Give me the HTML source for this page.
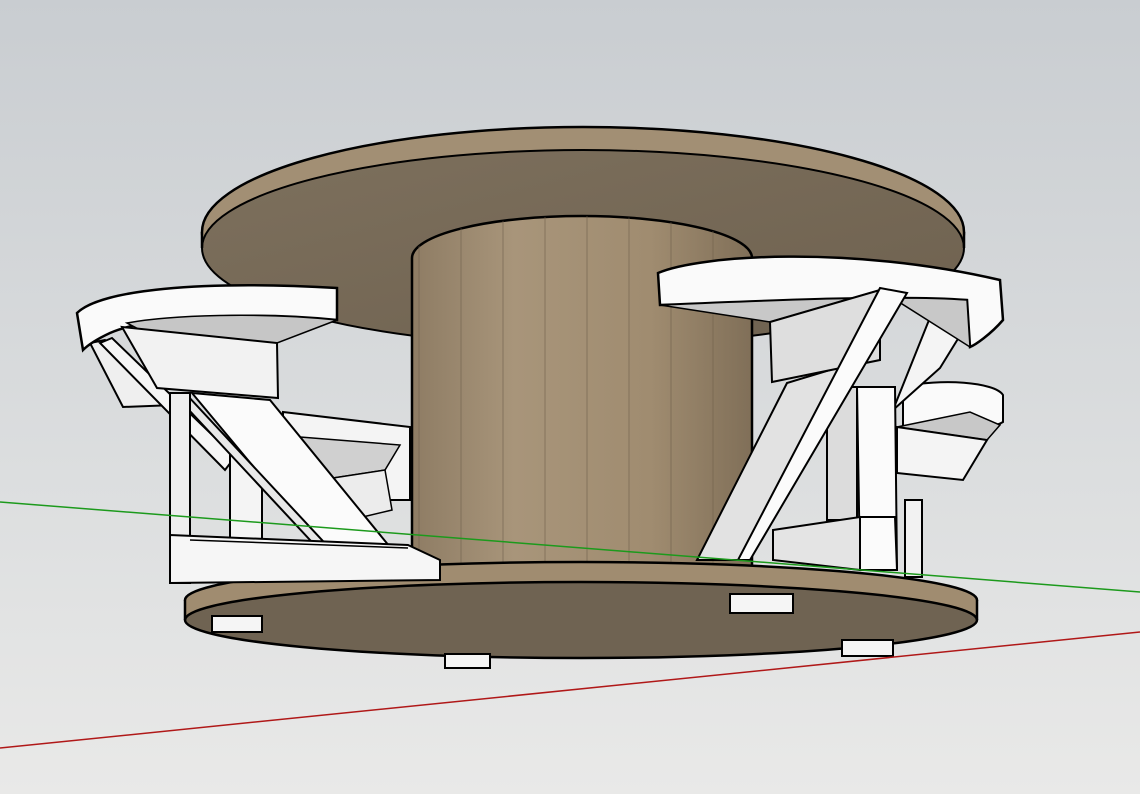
<!DOCTYPE html>
<html><head><meta charset="utf-8"><style>
html,body{margin:0;padding:0;width:1140px;height:794px;overflow:hidden}
svg{display:block}
</style></head><body>
<svg width="1140" height="794" viewBox="0 0 1140 794" xmlns="http://www.w3.org/2000/svg">
<defs>
<linearGradient id="bg" x1="0" y1="0" x2="0" y2="1">
<stop offset="0" stop-color="#c9cdd1"/><stop offset="0.6" stop-color="#dcdedf"/><stop offset="1" stop-color="#e9e9e8"/>
</linearGradient>
<linearGradient id="cyl" x1="0" y1="0" x2="1" y2="0">
<stop offset="0" stop-color="#8e7c64"/><stop offset="0.3" stop-color="#a8957a"/><stop offset="0.7" stop-color="#a08c70"/><stop offset="1" stop-color="#806f58"/>
</linearGradient>
<pattern id="planks" width="42" height="800" patternUnits="userSpaceOnUse">
<line x1="41" y1="0" x2="41" y2="800" stroke="#6d5e4a" stroke-width="1.2" opacity="0.5"/>
</pattern>
<linearGradient id="under" x1="0" y1="0" x2="1" y2="1">
<stop offset="0" stop-color="#7d705d"/><stop offset="1" stop-color="#6e614f"/>
</linearGradient>
</defs>
<rect width="1140" height="794" fill="url(#bg)"/>
<!-- top disk -->
<ellipse cx="583" cy="232" rx="381" ry="105" fill="#a28f74" stroke="#000" stroke-width="2.5"/>
<path d="M202,232 L202,248 A381,98 0 0 0 964,248 L964,232 Z" fill="#a28f74"/>
<ellipse cx="583" cy="248" rx="381" ry="98" fill="url(#under)" stroke="#000" stroke-width="2"/>
<line x1="202" y1="232" x2="202" y2="248" stroke="#000" stroke-width="2.5"/>
<line x1="964" y1="232" x2="964" y2="248" stroke="#000" stroke-width="2.5"/>
<!-- cylinder -->
<path d="M412,258 A170,42 0 0 1 752,258 L752,580 L412,580 Z" fill="url(#cyl)" stroke="#000" stroke-width="2.5"/>
<path d="M412,258 A170,42 0 0 1 752,258 L752,580 L412,580 Z" fill="url(#planks)"/>
<!-- back small stool left -->
<path d="M283,412 L410,427 L410,500 L283,500 Z" fill="#f4f4f4" stroke="#000" stroke-width="2"/>
<path d="M300,437 L400,445 L385,470 L320,480 Z" fill="#d0d0d0" stroke="#000" stroke-width="1.5"/>
<path d="M320,480 L385,470 L392,510 L350,520 Z" fill="#ececec" stroke="#000" stroke-width="1.5"/>
<!-- right small stool -->
<path d="M917,500 L922,500 L922,577 L905,577 L905,500 Z" fill="#f2f2f2" stroke="#000" stroke-width="2"/>
<path d="M903,387 C940,378 995,382 1003,395 L1003,422 C990,430 950,432 903,428 Z" fill="#fafafa" stroke="#000" stroke-width="2"/>
<path d="M897,427 L970,412 L1000,425 L987,440 Z" fill="#c8c8c8" stroke="#000" stroke-width="1.5"/>
<path d="M897,427 L987,440 L963,480 L897,473 Z" fill="#f4f4f4" stroke="#000" stroke-width="2"/>
<!-- bottom disk -->
<ellipse cx="581" cy="600" rx="396" ry="38" fill="#a08c70" stroke="#000" stroke-width="2.5"/>
<path d="M185,600 L185,620 A396,38 0 0 0 977,620 L977,600 Z" fill="#a08c70"/>
<ellipse cx="581" cy="620" rx="396" ry="38" fill="#6f6352" stroke="#000" stroke-width="2.5"/>
<line x1="185" y1="600" x2="185" y2="620" stroke="#000" stroke-width="2.5"/>
<line x1="977" y1="600" x2="977" y2="620" stroke="#000" stroke-width="2.5"/>
<!-- left stool -->
<path d="M90,343 L105,340 L175,405 L123,407 Z" fill="#efefef" stroke="#000" stroke-width="2"/>
<path d="M100,343 L112,338 L235,457 L225,470 Z" fill="#f6f6f6" stroke="#000" stroke-width="2"/>
<path d="M230,455 L262,455 L262,540 L230,540 Z" fill="#f4f4f4" stroke="#000" stroke-width="2"/>
<path d="M192,393 L270,400 L403,563 L337,567 Z" fill="#fbfbfb" stroke="#000" stroke-width="2"/>
<path d="M175,395 L186,394 L348,568 L337,569 Z" fill="#e8e8e8" stroke="#000" stroke-width="2"/>
<path d="M170,393 L190,393 L190,583 L170,583 Z" fill="#eeeeee" stroke="#000" stroke-width="2"/>
<path d="M170,535 L408,545 L440,560 L440,580 L170,583 Z" fill="#f6f6f6" stroke="#000" stroke-width="2"/>
<line x1="190" y1="540" x2="408" y2="548" stroke="#000" stroke-width="1.5"/>
<path d="M77,313 C100,290 200,280 337,288 L337,320 C260,312 150,315 110,333 C95,340 88,345 83,350 Z" fill="#fafafa" stroke="#000" stroke-width="2.5"/>
<path d="M127,323 C170,315 260,312 337,320 L277,343 L150,335 Z" fill="#c6c6c6" stroke="#000" stroke-width="1.5"/>
<path d="M122,327 L277,343 L278,398 L157,388 Z" fill="#f2f2f2" stroke="#000" stroke-width="2"/>
<!-- right stool -->
<path d="M827,387 L857,387 L857,520 L827,520 Z" fill="#dcdcdc" stroke="#000" stroke-width="2"/>
<path d="M937,300 L980,303 L940,368 L893,410 Z" fill="#f4f4f4" stroke="#000" stroke-width="2"/>
<path d="M697,560 L787,383 L863,360 L747,560 Z" fill="#e2e2e2" stroke="#000" stroke-width="2"/>
<path d="M857,387 L895,387 L897,570 L860,570 Z" fill="#fbfbfb" stroke="#000" stroke-width="2"/>
<path d="M773,530 L860,517 L860,570 L773,560 Z" fill="#e4e4e4" stroke="#000" stroke-width="2"/>
<path d="M860,517 L895,517 L897,570 L860,570 Z" fill="#fbfbfb" stroke="#000" stroke-width="2"/>
<path d="M658,273 C700,255 850,245 1000,280 L1003,320 C990,335 975,345 970,347 L967,300 C900,295 780,300 660,305 Z" fill="#fafafa" stroke="#000" stroke-width="2.5"/>
<path d="M660,305 C780,300 900,295 967,300 L970,347 L880,290 L770,322 Z" fill="#c8c8c8" stroke="#000" stroke-width="1.5"/>
<path d="M770,322 L880,290 L880,360 L772,382 Z" fill="#dedede" stroke="#000" stroke-width="2"/>
<path d="M880,288 L907,293 L750,560 L738,560 Z" fill="#fbfbfb" stroke="#000" stroke-width="2"/>
<!-- feet -->
<path d="M212,616 L262,616 L262,632 L212,632 Z" fill="#f5f5f5" stroke="#000" stroke-width="2"/>
<path d="M445,654 L490,654 L490,668 L445,668 Z" fill="#f5f5f5" stroke="#000" stroke-width="2"/>
<path d="M730,594 L793,594 L793,613 L730,613 Z" fill="#f5f5f5" stroke="#000" stroke-width="2"/>
<path d="M842,640 L893,640 L893,656 L842,656 Z" fill="#f5f5f5" stroke="#000" stroke-width="2"/>
<!-- axes -->
<line x1="0" y1="502" x2="1140" y2="592" stroke="#1c9a1c" stroke-width="1.5"/>
<line x1="0" y1="748" x2="1140" y2="632" stroke="#b01818" stroke-width="1.5"/>
</svg>
</body></html>
